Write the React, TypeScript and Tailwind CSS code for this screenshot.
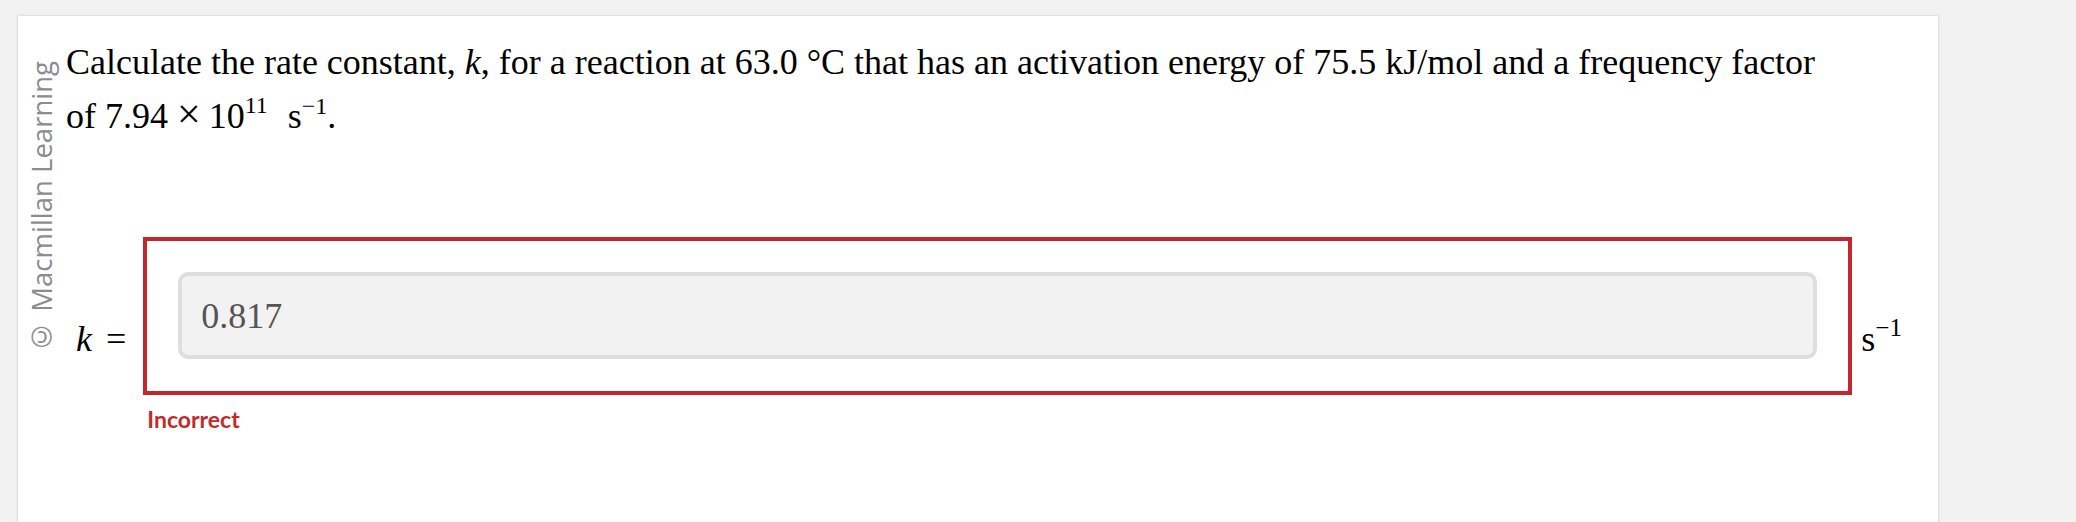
export default function App() {
  const serif = 'font-["Liberation_Serif","Times_New_Roman",serif]';
  return (
    <div className="min-h-screen bg-[#f2f2f2] pl-[18px] pt-[16px]">
      <div className="flex h-[520px] w-[1920px] bg-white shadow-[0_0_3px_rgba(0,0,0,0.18)]">
        <div className="w-[48px] shrink-0">
          <div className="ml-[10px] mt-[45px] rotate-180 whitespace-nowrap font-['Open_Sans',sans-serif] text-[27.5px] leading-none text-[#8c8c8c] [writing-mode:vertical-rl]">
            © Macmillan Learning
          </div>
        </div>

        <div className="flex-1">
          <p className={`${serif} mt-[19px] w-[1775px] text-[36px] leading-[54px] text-black`}>
            Calculate the rate constant, <i>k</i>, for a reaction at 63.0 °C that has an activation
            energy of 75.5 kJ/mol and a frequency factor of 7.94
            <span className="ml-[9px] mr-[8px] text-[42px] leading-none">×</span>10
            <span className="relative -top-[15px] text-[24px] leading-none">11</span>
            <span className="ml-[20px]">s</span>
            <span className="relative -top-[14px] text-[24px] leading-none">−1</span>.
          </p>

          <div className="mt-[94px] flex items-start">
            <div className={`${serif} ml-[10px] mt-[84px] text-[36px] leading-none text-black`}>
              <i>k</i>
              <span className="ml-[14px]">=</span>
            </div>

            <div className="ml-[17px]">
              <div className="w-[1709px] border-[4px] border-[#c1272d] px-[31px] pb-[32px] pt-[31px]">
                <input
                  readOnly
                  value="0.817"
                  className={`${serif} block h-[87px] w-full rounded-[10px] border-[4px] border-[#dedede] bg-[#f2f2f2] pl-[19px] text-[36px] text-[#555] outline-none`}
                />
              </div>
              <div className="ml-[4px] mt-[13px] font-['Lato',sans-serif] text-[23px] font-bold leading-none text-[#c52a2a]">
                Incorrect
              </div>
            </div>

            <div className={`${serif} ml-[9px] mt-[84px] text-[36px] leading-none text-black`}>
              s<span className="relative -top-[15px] text-[25px] leading-none">−1</span>
            </div>
          </div>
        </div>
      </div>
    </div>
  );
}
